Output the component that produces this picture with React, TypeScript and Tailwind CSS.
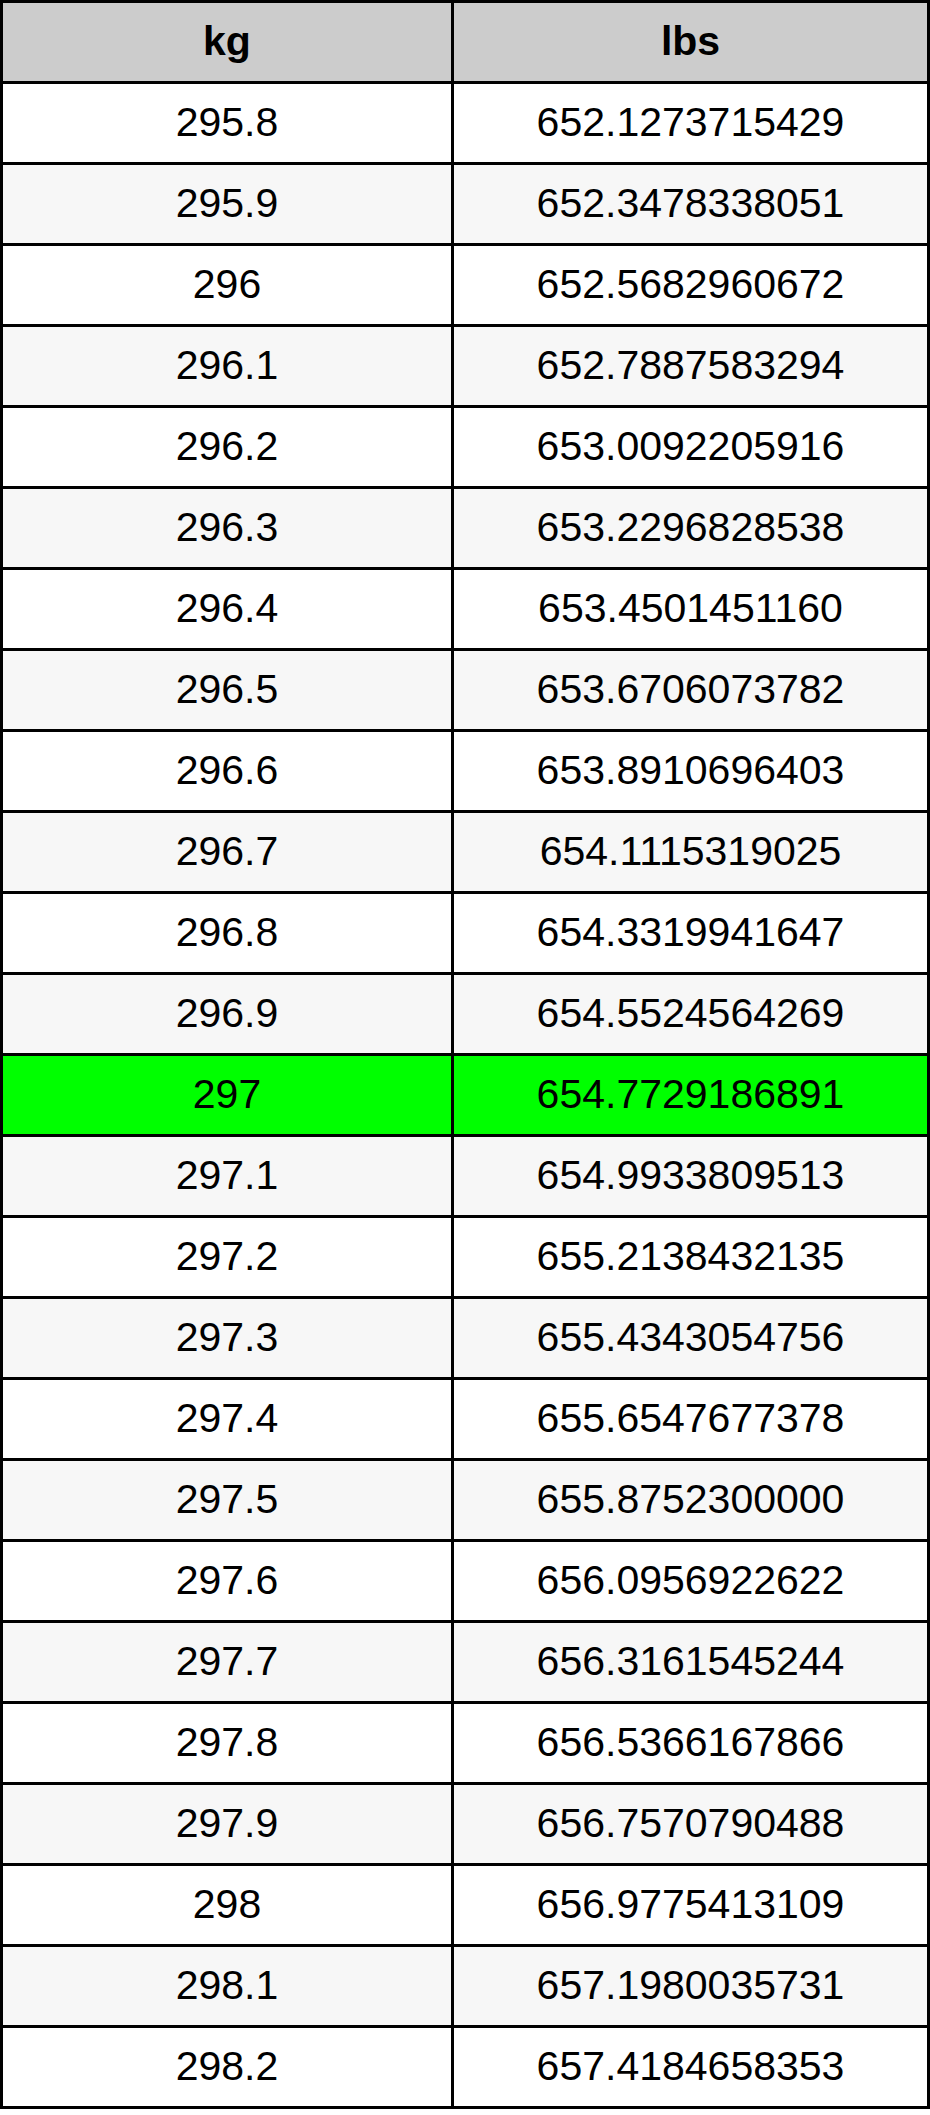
const rows: [string, string][] = [
  ['295.8', '652.1273715429'],
  ['295.9', '652.3478338051'],
  ['296', '652.5682960672'],
  ['296.1', '652.7887583294'],
  ['296.2', '653.0092205916'],
  ['296.3', '653.2296828538'],
  ['296.4', '653.4501451160'],
  ['296.5', '653.6706073782'],
  ['296.6', '653.8910696403'],
  ['296.7', '654.1115319025'],
  ['296.8', '654.3319941647'],
  ['296.9', '654.5524564269'],
  ['297', '654.7729186891'],
  ['297.1', '654.9933809513'],
  ['297.2', '655.2138432135'],
  ['297.3', '655.4343054756'],
  ['297.4', '655.6547677378'],
  ['297.5', '655.8752300000'],
  ['297.6', '656.0956922622'],
  ['297.7', '656.3161545244'],
  ['297.8', '656.5366167866'],
  ['297.9', '656.7570790488'],
  ['298', '656.9775413109'],
  ['298.1', '657.1980035731'],
  ['298.2', '657.4184658353'],
];

export default function App() {
  return (
    <div className="min-h-[2115px] bg-white font-['Liberation_Sans',Arial,sans-serif] text-black">
      <table className="w-[930px] table-fixed border-collapse border-[3px] border-black text-center text-[41px]">
        <colgroup>
          <col className="w-[451px]" />
          <col />
        </colgroup>
        <thead>
          <tr className="h-[81px] bg-[#cccccc]">
            <th className="border-[3px] border-black p-0 font-bold">kg</th>
            <th className="border-[3px] border-black p-0 font-bold">lbs</th>
          </tr>
        </thead>
        <tbody>
          {rows.map(([kg, lbs], i) => {
            // 297 줄은 강조
            const bg =
              kg === '297'
                ? 'bg-[#00ff00]'
                : i % 2 === 0
                  ? 'bg-white'
                  : 'bg-[#f7f7f7]';
            return (
              <tr key={kg} className={`h-[81px] ${bg}`}>
                <td className="border-[3px] border-black p-0">{kg}</td>
                <td className="border-[3px] border-black p-0">{lbs}</td>
              </tr>
            );
          })}
        </tbody>
      </table>
    </div>
  );
}
